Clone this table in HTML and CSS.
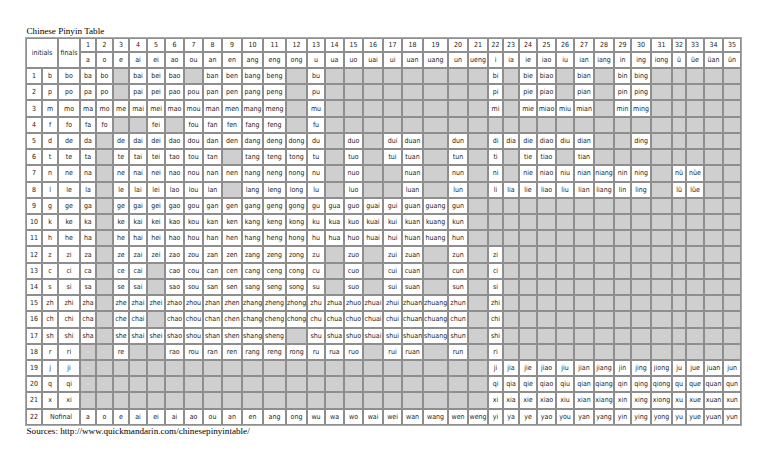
FILE: index.html
```html
<!DOCTYPE html>
<html>
<head>
<meta charset="utf-8">
<link rel="stylesheet" href="styles.css">
</head>
<body>
<div class="title">Chinese Pinyin Table</div>
<table class="py">
<colgroup>
<col><col><col><col><col><col><col><col><col><col><col><col><col><col><col><col><col><col><col><col><col><col><col><col><col><col><col><col><col><col><col><col><col><col><col><col><col><col>
</colgroup>
<thead>
<tr class="h1"><td colspan="2" rowspan="2">initials</td><td rowspan="2">finals</td><td>1</td><td>2</td><td>3</td><td>4</td><td>5</td><td>6</td><td>7</td><td>8</td><td>9</td><td>10</td><td>11</td><td>12</td><td>13</td><td>14</td><td>15</td><td>16</td><td>17</td><td>18</td><td>19</td><td>20</td><td>21</td><td>22</td><td>23</td><td>24</td><td>25</td><td>26</td><td>27</td><td>28</td><td>29</td><td>30</td><td>31</td><td>32</td><td>33</td><td>34</td><td>35</td></tr>
<tr class="h2"><td>a</td><td>o</td><td>e</td><td>ai</td><td>ei</td><td>ao</td><td>ou</td><td>an</td><td>en</td><td>ang</td><td>eng</td><td>ong</td><td>u</td><td>ua</td><td>uo</td><td>uai</td><td>ui</td><td>uan</td><td>uang</td><td>un</td><td>ueng</td><td>i</td><td>ia</td><td>ie</td><td>iao</td><td>iu</td><td>ian</td><td>iang</td><td>in</td><td>ing</td><td>iong</td><td>ü</td><td>üe</td><td>üan</td><td>ün</td></tr>
</thead>
<tbody>
<tr><td>1</td><td>b</td><td>bo</td><td>ba</td><td>bo</td><td class="x"></td><td>bai</td><td>bei</td><td>bao</td><td class="x"></td><td>ban</td><td>ben</td><td>bang</td><td>beng</td><td class="x"></td><td>bu</td><td class="x"></td><td class="x"></td><td class="x"></td><td class="x"></td><td class="x"></td><td class="x"></td><td class="x"></td><td class="x"></td><td>bi</td><td class="x"></td><td>bie</td><td>biao</td><td class="x"></td><td>bian</td><td class="x"></td><td>bin</td><td>bing</td><td class="x"></td><td class="x"></td><td class="x"></td><td class="x"></td><td class="x"></td></tr>
<tr><td>2</td><td>p</td><td>po</td><td>pa</td><td>po</td><td class="x"></td><td>pai</td><td>pei</td><td>pao</td><td>pou</td><td>pan</td><td>pen</td><td>pang</td><td>peng</td><td class="x"></td><td>pu</td><td class="x"></td><td class="x"></td><td class="x"></td><td class="x"></td><td class="x"></td><td class="x"></td><td class="x"></td><td class="x"></td><td>pi</td><td class="x"></td><td>pie</td><td>piao</td><td class="x"></td><td>pian</td><td class="x"></td><td>pin</td><td>ping</td><td class="x"></td><td class="x"></td><td class="x"></td><td class="x"></td><td class="x"></td></tr>
<tr><td>3</td><td>m</td><td>mo</td><td>ma</td><td>mo</td><td>me</td><td>mai</td><td>mei</td><td>mao</td><td>mou</td><td>man</td><td>men</td><td>mang</td><td>meng</td><td class="x"></td><td>mu</td><td class="x"></td><td class="x"></td><td class="x"></td><td class="x"></td><td class="x"></td><td class="x"></td><td class="x"></td><td class="x"></td><td>mi</td><td class="x"></td><td>mie</td><td>miao</td><td>miu</td><td>mian</td><td class="x"></td><td>min</td><td>ming</td><td class="x"></td><td class="x"></td><td class="x"></td><td class="x"></td><td class="x"></td></tr>
<tr><td>4</td><td>f</td><td>fo</td><td>fa</td><td>fo</td><td class="x"></td><td class="x"></td><td>fei</td><td class="x"></td><td>fou</td><td>fan</td><td>fen</td><td>fang</td><td>feng</td><td class="x"></td><td>fu</td><td class="x"></td><td class="x"></td><td class="x"></td><td class="x"></td><td class="x"></td><td class="x"></td><td class="x"></td><td class="x"></td><td class="x"></td><td class="x"></td><td class="x"></td><td class="x"></td><td class="x"></td><td class="x"></td><td class="x"></td><td class="x"></td><td class="x"></td><td class="x"></td><td class="x"></td><td class="x"></td><td class="x"></td><td class="x"></td></tr>
<tr><td>5</td><td>d</td><td>de</td><td>da</td><td class="x"></td><td>de</td><td>dai</td><td>dei</td><td>dao</td><td>dou</td><td>dan</td><td>den</td><td>dang</td><td>deng</td><td>dong</td><td>du</td><td class="x"></td><td>duo</td><td class="x"></td><td>dui</td><td>duan</td><td class="x"></td><td>dun</td><td class="x"></td><td>di</td><td>dia</td><td>die</td><td>diao</td><td>diu</td><td>dian</td><td class="x"></td><td class="x"></td><td>ding</td><td class="x"></td><td class="x"></td><td class="x"></td><td class="x"></td><td class="x"></td></tr>
<tr><td>6</td><td>t</td><td>te</td><td>ta</td><td class="x"></td><td>te</td><td>tai</td><td>tei</td><td>tao</td><td>tou</td><td>tan</td><td class="x"></td><td>tang</td><td>teng</td><td>tong</td><td>tu</td><td class="x"></td><td>tuo</td><td class="x"></td><td>tui</td><td>tuan</td><td class="x"></td><td>tun</td><td class="x"></td><td>ti</td><td class="x"></td><td>tie</td><td>tiao</td><td class="x"></td><td>tian</td><td class="x"></td><td class="x"></td><td class="x"></td><td class="x"></td><td class="x"></td><td class="x"></td><td class="x"></td><td class="x"></td></tr>
<tr><td>7</td><td>n</td><td>ne</td><td>na</td><td class="x"></td><td>ne</td><td>nai</td><td>nei</td><td>nao</td><td>nou</td><td>nan</td><td>nen</td><td>nang</td><td>neng</td><td>nong</td><td>nu</td><td class="x"></td><td>nuo</td><td class="x"></td><td class="x"></td><td>nuan</td><td class="x"></td><td>nun</td><td class="x"></td><td>ni</td><td class="x"></td><td>nie</td><td>niao</td><td>niu</td><td>nian</td><td>niang</td><td>nin</td><td>ning</td><td class="x"></td><td>nü</td><td>nüe</td><td class="x"></td><td class="x"></td></tr>
<tr><td>8</td><td>l</td><td>le</td><td>la</td><td class="x"></td><td>le</td><td>lai</td><td>lei</td><td>lao</td><td>lou</td><td>lan</td><td class="x"></td><td>lang</td><td>leng</td><td>long</td><td>lu</td><td class="x"></td><td>luo</td><td class="x"></td><td class="x"></td><td>luan</td><td class="x"></td><td>lun</td><td class="x"></td><td>li</td><td>lia</td><td>lie</td><td>liao</td><td>liu</td><td>lian</td><td>liang</td><td>lin</td><td>ling</td><td class="x"></td><td>lü</td><td>lüe</td><td class="x"></td><td class="x"></td></tr>
<tr><td>9</td><td>g</td><td>ge</td><td>ga</td><td class="x"></td><td>ge</td><td>gai</td><td>gei</td><td>gao</td><td>gou</td><td>gan</td><td>gen</td><td>gang</td><td>geng</td><td>gong</td><td>gu</td><td>gua</td><td>guo</td><td>guai</td><td>gui</td><td>guan</td><td>guang</td><td>gun</td><td class="x"></td><td class="x"></td><td class="x"></td><td class="x"></td><td class="x"></td><td class="x"></td><td class="x"></td><td class="x"></td><td class="x"></td><td class="x"></td><td class="x"></td><td class="x"></td><td class="x"></td><td class="x"></td><td class="x"></td></tr>
<tr><td>10</td><td>k</td><td>ke</td><td>ka</td><td class="x"></td><td>ke</td><td>kai</td><td>kei</td><td>kao</td><td>kou</td><td>kan</td><td>ken</td><td>kang</td><td>keng</td><td>kong</td><td>ku</td><td>kua</td><td>kuo</td><td>kuai</td><td>kui</td><td>kuan</td><td>kuang</td><td>kun</td><td class="x"></td><td class="x"></td><td class="x"></td><td class="x"></td><td class="x"></td><td class="x"></td><td class="x"></td><td class="x"></td><td class="x"></td><td class="x"></td><td class="x"></td><td class="x"></td><td class="x"></td><td class="x"></td><td class="x"></td></tr>
<tr><td>11</td><td>h</td><td>he</td><td>ha</td><td class="x"></td><td>he</td><td>hai</td><td>hei</td><td>hao</td><td>hou</td><td>han</td><td>hen</td><td>hang</td><td>heng</td><td>hong</td><td>hu</td><td>hua</td><td>huo</td><td>huai</td><td>hui</td><td>huan</td><td>huang</td><td>hun</td><td class="x"></td><td class="x"></td><td class="x"></td><td class="x"></td><td class="x"></td><td class="x"></td><td class="x"></td><td class="x"></td><td class="x"></td><td class="x"></td><td class="x"></td><td class="x"></td><td class="x"></td><td class="x"></td><td class="x"></td></tr>
<tr><td>12</td><td>z</td><td>zi</td><td>za</td><td class="x"></td><td>ze</td><td>zai</td><td>zei</td><td>zao</td><td>zou</td><td>zan</td><td>zen</td><td>zang</td><td>zeng</td><td>zong</td><td>zu</td><td class="x"></td><td>zuo</td><td class="x"></td><td>zui</td><td>zuan</td><td class="x"></td><td>zun</td><td class="x"></td><td>zi</td><td class="x"></td><td class="x"></td><td class="x"></td><td class="x"></td><td class="x"></td><td class="x"></td><td class="x"></td><td class="x"></td><td class="x"></td><td class="x"></td><td class="x"></td><td class="x"></td><td class="x"></td></tr>
<tr><td>13</td><td>c</td><td>ci</td><td>ca</td><td class="x"></td><td>ce</td><td>cai</td><td class="x"></td><td>cao</td><td>cou</td><td>can</td><td>cen</td><td>cang</td><td>ceng</td><td>cong</td><td>cu</td><td class="x"></td><td>cuo</td><td class="x"></td><td>cui</td><td>cuan</td><td class="x"></td><td>cun</td><td class="x"></td><td>ci</td><td class="x"></td><td class="x"></td><td class="x"></td><td class="x"></td><td class="x"></td><td class="x"></td><td class="x"></td><td class="x"></td><td class="x"></td><td class="x"></td><td class="x"></td><td class="x"></td><td class="x"></td></tr>
<tr><td>14</td><td>s</td><td>si</td><td>sa</td><td class="x"></td><td>se</td><td>sai</td><td class="x"></td><td>sao</td><td>sou</td><td>san</td><td>sen</td><td>sang</td><td>seng</td><td>song</td><td>su</td><td class="x"></td><td>suo</td><td class="x"></td><td>sui</td><td>suan</td><td class="x"></td><td>sun</td><td class="x"></td><td>si</td><td class="x"></td><td class="x"></td><td class="x"></td><td class="x"></td><td class="x"></td><td class="x"></td><td class="x"></td><td class="x"></td><td class="x"></td><td class="x"></td><td class="x"></td><td class="x"></td><td class="x"></td></tr>
<tr><td>15</td><td>zh</td><td>zhi</td><td>zha</td><td class="x"></td><td>zhe</td><td>zhai</td><td>zhei</td><td>zhao</td><td>zhou</td><td>zhan</td><td>zhen</td><td>zhang</td><td>zheng</td><td>zhong</td><td>zhu</td><td>zhua</td><td>zhuo</td><td>zhuai</td><td>zhui</td><td>zhuan</td><td>zhuang</td><td>zhun</td><td class="x"></td><td>zhi</td><td class="x"></td><td class="x"></td><td class="x"></td><td class="x"></td><td class="x"></td><td class="x"></td><td class="x"></td><td class="x"></td><td class="x"></td><td class="x"></td><td class="x"></td><td class="x"></td><td class="x"></td></tr>
<tr><td>16</td><td>ch</td><td>chi</td><td>cha</td><td class="x"></td><td>che</td><td>chai</td><td class="x"></td><td>chao</td><td>chou</td><td>chan</td><td>chen</td><td>chang</td><td>cheng</td><td>chong</td><td>chu</td><td>chua</td><td>chuo</td><td>chuai</td><td>chui</td><td>chuan</td><td>chuang</td><td>chun</td><td class="x"></td><td>chi</td><td class="x"></td><td class="x"></td><td class="x"></td><td class="x"></td><td class="x"></td><td class="x"></td><td class="x"></td><td class="x"></td><td class="x"></td><td class="x"></td><td class="x"></td><td class="x"></td><td class="x"></td></tr>
<tr><td>17</td><td>sh</td><td>shi</td><td>sha</td><td class="x"></td><td>she</td><td>shai</td><td>shei</td><td>shao</td><td>shou</td><td>shan</td><td>shen</td><td>shang</td><td>sheng</td><td class="x"></td><td>shu</td><td>shua</td><td>shuo</td><td>shuai</td><td>shui</td><td>shuan</td><td>shuang</td><td>shun</td><td class="x"></td><td>shi</td><td class="x"></td><td class="x"></td><td class="x"></td><td class="x"></td><td class="x"></td><td class="x"></td><td class="x"></td><td class="x"></td><td class="x"></td><td class="x"></td><td class="x"></td><td class="x"></td><td class="x"></td></tr>
<tr><td>18</td><td>r</td><td>ri</td><td class="x"></td><td class="x"></td><td>re</td><td class="x"></td><td class="x"></td><td>rao</td><td>rou</td><td>ran</td><td>ren</td><td>rang</td><td>reng</td><td>rong</td><td>ru</td><td>rua</td><td>ruo</td><td class="x"></td><td>rui</td><td>ruan</td><td class="x"></td><td>run</td><td class="x"></td><td>ri</td><td class="x"></td><td class="x"></td><td class="x"></td><td class="x"></td><td class="x"></td><td class="x"></td><td class="x"></td><td class="x"></td><td class="x"></td><td class="x"></td><td class="x"></td><td class="x"></td><td class="x"></td></tr>
<tr><td>19</td><td>j</td><td>ji</td><td class="x"></td><td class="x"></td><td class="x"></td><td class="x"></td><td class="x"></td><td class="x"></td><td class="x"></td><td class="x"></td><td class="x"></td><td class="x"></td><td class="x"></td><td class="x"></td><td class="x"></td><td class="x"></td><td class="x"></td><td class="x"></td><td class="x"></td><td class="x"></td><td class="x"></td><td class="x"></td><td class="x"></td><td>ji</td><td>jia</td><td>jie</td><td>jiao</td><td>jiu</td><td>jian</td><td>jiang</td><td>jin</td><td>jing</td><td>jiong</td><td>ju</td><td>jue</td><td>juan</td><td>jun</td></tr>
<tr><td>20</td><td>q</td><td>qi</td><td class="x"></td><td class="x"></td><td class="x"></td><td class="x"></td><td class="x"></td><td class="x"></td><td class="x"></td><td class="x"></td><td class="x"></td><td class="x"></td><td class="x"></td><td class="x"></td><td class="x"></td><td class="x"></td><td class="x"></td><td class="x"></td><td class="x"></td><td class="x"></td><td class="x"></td><td class="x"></td><td class="x"></td><td>qi</td><td>qia</td><td>qie</td><td>qiao</td><td>qiu</td><td>qian</td><td>qiang</td><td>qin</td><td>qing</td><td>qiong</td><td>qu</td><td>que</td><td>quan</td><td>qun</td></tr>
<tr><td>21</td><td>x</td><td>xi</td><td class="x"></td><td class="x"></td><td class="x"></td><td class="x"></td><td class="x"></td><td class="x"></td><td class="x"></td><td class="x"></td><td class="x"></td><td class="x"></td><td class="x"></td><td class="x"></td><td class="x"></td><td class="x"></td><td class="x"></td><td class="x"></td><td class="x"></td><td class="x"></td><td class="x"></td><td class="x"></td><td class="x"></td><td>xi</td><td>xia</td><td>xie</td><td>xiao</td><td>xiu</td><td>xian</td><td>xiang</td><td>xin</td><td>xing</td><td>xiong</td><td>xu</td><td>xue</td><td>xuan</td><td>xun</td></tr>
<tr><td>22</td><td colspan="2">Nofinal</td><td>a</td><td>o</td><td>e</td><td>ai</td><td>ei</td><td>ai</td><td>ao</td><td>ou</td><td>an</td><td>en</td><td>ang</td><td>ong</td><td>wu</td><td>wa</td><td>wo</td><td>wai</td><td>wei</td><td>wan</td><td>wang</td><td>wen</td><td>weng</td><td>yi</td><td>ya</td><td>ye</td><td>yao</td><td>you</td><td>yan</td><td>yang</td><td>yin</td><td>ying</td><td>yong</td><td>yu</td><td>yue</td><td>yuan</td><td>yun</td></tr>
</tbody>
</table>
<div class="src">Sources: http://www.quickmandarin.com/chinesepinyintable/</div>
</body>
</html>
```

FILE: styles.css
```css
html, body {
  margin: 0;
  background: #ffffff;
}
body {
  padding: 26px 0 0 25px;
}
.title, .src {
  font-family: "Liberation Serif", "Times New Roman", serif;
  font-size: 9.15px;
  line-height: 11px;
  padding-left: 1.5px;
  color: #000;
  white-space: nowrap;
}
.py {
  border-collapse: separate;
  border-spacing: 0;
  table-layout: fixed;
  width: 717px;
  border: 1px solid #a8a8a8;
  font-family: "DejaVu Sans Condensed", "DejaVu Sans", sans-serif;
  font-stretch: condensed;
  font-size: 7px;
  color: #1c1c1c;
}
.py td {
  border: 1px solid #8e8e8e;
  padding: 0;
  text-align: center;
  vertical-align: middle;
  white-space: nowrap;
  overflow: hidden;
  box-sizing: border-box;
  height: 16.23px;
  line-height: 8px;
}
.py .h1 td { height: 14px; }
.py .h2 td { height: 16px; }
.py td.x { background: #cfcfcf; }

.py col:nth-child(1) { width: 16px; }
.py col:nth-child(2) { width: 16px; }
.py col:nth-child(3) { width: 22px; }
.py col:nth-child(4) { width: 16px; }
.py col:nth-child(5) { width: 17px; }
.py col:nth-child(6) { width: 16px; }
.py col:nth-child(7) { width: 18px; }
.py col:nth-child(8) { width: 18px; }
.py col:nth-child(9) { width: 19px; }
.py col:nth-child(10) { width: 19px; }
.py col:nth-child(11) { width: 19px; }
.py col:nth-child(12) { width: 20px; }
.py col:nth-child(13) { width: 21px; }
.py col:nth-child(14) { width: 23px; }
.py col:nth-child(15) { width: 21px; }
.py col:nth-child(16) { width: 18px; }
.py col:nth-child(17) { width: 19px; }
.py col:nth-child(18) { width: 19px; }
.py col:nth-child(19) { width: 20px; }
.py col:nth-child(20) { width: 19px; }
.py col:nth-child(21) { width: 21px; }
.py col:nth-child(22) { width: 25px; }
.py col:nth-child(23) { width: 20px; }
.py col:nth-child(24) { width: 20px; }
.py col:nth-child(25) { width: 15px; }
.py col:nth-child(26) { width: 16px; }
.py col:nth-child(27) { width: 18px; }
.py col:nth-child(28) { width: 19px; }
.py col:nth-child(29) { width: 18px; }
.py col:nth-child(30) { width: 20px; }
.py col:nth-child(31) { width: 20px; }
.py col:nth-child(32) { width: 17px; }
.py col:nth-child(33) { width: 20px; }
.py col:nth-child(34) { width: 21px; }
.py col:nth-child(35) { width: 14px; }
.py col:nth-child(36) { width: 18px; }
.py col:nth-child(37) { width: 19px; }
.py col:nth-child(38) { width: 18px; }
```
